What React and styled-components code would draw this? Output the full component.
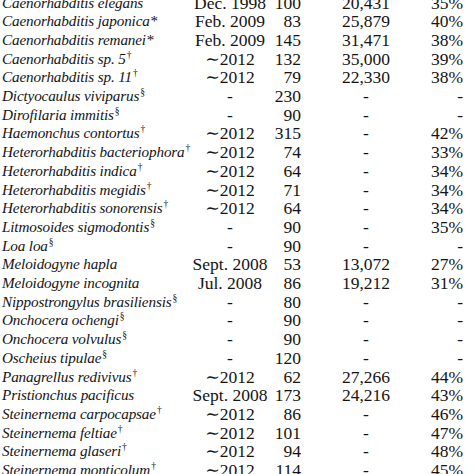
import React from "react";
import styled, { createGlobalStyle } from "styled-components";

const GlobalStyle = createGlobalStyle`
  html, body {
    margin: 0;
    padding: 0;
    background: #ffffff;
  }
  body {
    width: 474px;
    height: 474px;
    overflow: hidden;
  }
`;

const Page = styled.div`
  width: 474px;
  height: 474px;
  overflow: hidden;
  background: #ffffff;
`;

const Table = styled.table`
  width: 474px;
  margin-top: -6.5px;
  border-collapse: collapse;
  table-layout: fixed;
  font-family: "Liberation Serif", "DejaVu Serif", serif;
  font-size: 17.5px;
  color: #141414;
`;

const Row = styled.tr`
  height: 18.7px;
`;

const Cell = styled.td`
  height: 18.7px;
  padding: 0;
  padding-right: ${(p) => p.$pr || 0}px;
  text-align: ${(p) => p.$align || "left"};
  white-space: nowrap;
  overflow: visible;
  line-height: 18.7px;
  vertical-align: middle;
`;

const NameCell = styled.td`
  height: 18.7px;
  padding: 0 0 0 2px;
  white-space: nowrap;
  overflow: visible;
  font-size: 15.2px;
  letter-spacing: -0.15px;
  line-height: 18.7px;
  vertical-align: middle;
`;

const Name = styled.i`
  font-style: italic;
`;

const Mark = styled.sup`
  font-size: 9.5px;
  line-height: 0;
  vertical-align: 6px;
  font-style: normal;
  margin-left: 1px;
`;

const rows = [
  ["Caenorhabditis elegans", "", "Dec. 1998", "100", "20,431", "35%"],
  ["Caenorhabditis japonica*", "", "Feb. 2009", "83", "25,879", "40%"],
  ["Caenorhabditis remanei*", "", "Feb. 2009", "145", "31,471", "38%"],
  ["Caenorhabditis sp. 5", "†", "∼2012", "132", "35,000", "39%"],
  ["Caenorhabditis sp. 11", "†", "∼2012", "79", "22,330", "38%"],
  ["Dictyocaulus viviparus", "§", "-", "230", "-", "-"],
  ["Dirofilaria immitis", "§", "-", "90", "-", "-"],
  ["Haemonchus contortus", "†", "∼2012", "315", "-", "42%"],
  ["Heterorhabditis bacteriophora", "†", "∼2012", "74", "-", "33%"],
  ["Heterorhabditis indica", "†", "∼2012", "64", "-", "34%"],
  ["Heterorhabditis megidis", "†", "∼2012", "71", "-", "34%"],
  ["Heterorhabditis sonorensis", "†", "∼2012", "64", "-", "34%"],
  ["Litmosoides sigmodontis", "§", "-", "90", "-", "35%"],
  ["Loa loa", "§", "-", "90", "-", "-"],
  ["Meloidogyne hapla", "", "Sept. 2008", "53", "13,072", "27%"],
  ["Meloidogyne incognita", "", "Jul. 2008", "86", "19,212", "31%"],
  ["Nippostrongylus brasiliensis", "§", "-", "80", "-", "-"],
  ["Onchocera ochengi", "§", "-", "90", "-", "-"],
  ["Onchocera volvulus", "§", "-", "90", "-", "-"],
  ["Oscheius tipulae", "§", "-", "120", "-", "-"],
  ["Panagrellus redivivus", "†", "∼2012", "62", "27,266", "44%"],
  ["Pristionchus pacificus", "", "Sept. 2008", "173", "24,216", "43%"],
  ["Steinernema carpocapsae", "†", "∼2012", "86", "-", "46%"],
  ["Steinernema feltiae", "†", "∼2012", "101", "-", "47%"],
  ["Steinernema glaseri", "†", "∼2012", "94", "-", "48%"],
  ["Steinernema monticolum", "†", "∼2012", "114", "-", "45%"],
];

export default function App() {
  return (
    <Page>
      <GlobalStyle />
      <Table>
        <colgroup>
          <col style={{ width: 190 }} />
          <col style={{ width: 80 }} />
          <col style={{ width: 34 }} />
          <col style={{ width: 124 }} />
          <col style={{ width: 46 }} />
        </colgroup>
        <tbody>
          {rows.map(([name, mark, date, len, genes, gc]) => (
            <Row key={name}>
              <NameCell>
                <Name>{name}</Name>
                {mark && <Mark>{mark}</Mark>}
              </NameCell>
              <Cell $align="center">{date}</Cell>
              <Cell $align="right" $pr={3}>{len}</Cell>
              <Cell $align="center">{genes}</Cell>
              <Cell $align="right" $pr={11}>{gc}</Cell>
            </Row>
          ))}
        </tbody>
      </Table>
    </Page>
  );
}
